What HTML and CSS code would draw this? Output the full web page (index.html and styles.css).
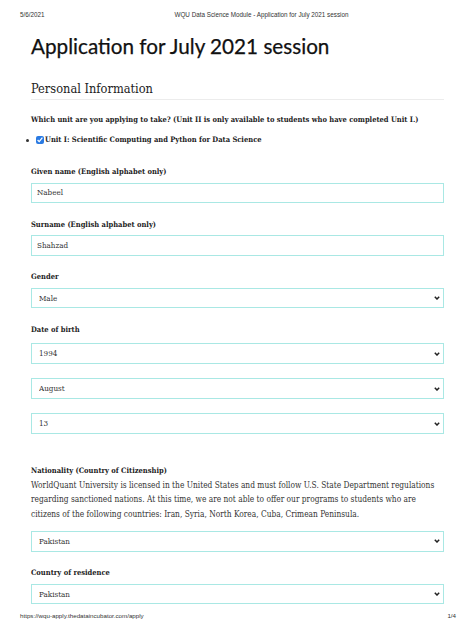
FILE: index.html
```html
<!DOCTYPE html>
<html lang="en">
<head>
<meta charset="utf-8">
<title>WQU Data Science Module - Application for July 2021 session</title>
<link rel="stylesheet" href="styles.css">
</head>
<body>
<header class="print-head">
  <span class="ph-date">5/6/2021</span>
  <span class="ph-title">WQU Data Science Module - Application for July 2021 session</span>
</header>
<main class="page">
  <h1 class="title">Application for July 2021 session</h1>
  <h2 class="section">Personal Information</h2>
  <p class="question">Which unit are you applying to take? (Unit II is only available to students who have completed Unit I.)</p>
  <ul class="units">
    <li class="unit"><input class="check" type="checkbox" checked id="u1"><label for="u1">Unit I: Scientific Computing and Python for Data Science</label></li>
  </ul>

  <div class="field field-first">
    <label class="label">Given name (English alphabet only)</label>
    <input class="box" type="text" value="Nabeel">
  </div>
  <div class="field">
    <label class="label">Surname (English alphabet only)</label>
    <input class="box" type="text" value="Shahzad">
  </div>
  <div class="field">
    <label class="label">Gender</label>
    <div class="sel">
      <select class="box select"><option>Male</option></select>
      <svg class="chev" viewBox="0 0 6 4" width="6" height="4"><path d="M0.8 0.8 L3 3 L5.2 0.8" fill="none" stroke="#222" stroke-width="1.5"/></svg>
    </div>
  </div>
  <div class="field">
    <label class="label label-dob">Date of birth</label>
    <div class="sel">
      <select class="box select"><option>1994</option></select>
      <svg class="chev" viewBox="0 0 6 4" width="6" height="4"><path d="M0.8 0.8 L3 3 L5.2 0.8" fill="none" stroke="#222" stroke-width="1.5"/></svg>
    </div>
    <div class="sel sel-next">
      <select class="box select"><option>August</option></select>
      <svg class="chev" viewBox="0 0 6 4" width="6" height="4"><path d="M0.8 0.8 L3 3 L5.2 0.8" fill="none" stroke="#222" stroke-width="1.5"/></svg>
    </div>
    <div class="sel sel-next">
      <select class="box select"><option>13</option></select>
      <svg class="chev" viewBox="0 0 6 4" width="6" height="4"><path d="M0.8 0.8 L3 3 L5.2 0.8" fill="none" stroke="#222" stroke-width="1.5"/></svg>
    </div>
  </div>
  <div class="field field-nat">
    <label class="label">Nationality (Country of Citizenship)</label>
    <p class="help">WorldQuant University is licensed in the United States and must follow U.S. State Department regulations<br>regarding sanctioned nations. At this time, we are not able to offer our programs to students who are<br>citizens of the following countries: Iran, Syria, North Korea, Cuba, Crimean Peninsula.</p>
    <div class="sel sel-help">
      <select class="box select"><option>Pakistan</option></select>
      <svg class="chev" viewBox="0 0 6 4" width="6" height="4"><path d="M0.8 0.8 L3 3 L5.2 0.8" fill="none" stroke="#222" stroke-width="1.5"/></svg>
    </div>
  </div>
  <div class="field">
    <label class="label">Country of residence</label>
    <div class="sel">
      <select class="box select"><option>Pakistan</option></select>
      <svg class="chev" viewBox="0 0 6 4" width="6" height="4"><path d="M0.8 0.8 L3 3 L5.2 0.8" fill="none" stroke="#222" stroke-width="1.5"/></svg>
    </div>
  </div>
</main>
<footer class="print-foot">
  <span class="pf-url">https://wqu-apply.thedataincubator.com/apply</span>
  <span class="pf-page">1/4</span>
</footer>
</body>
</html>
```
FILE: styles.css
```css
* { box-sizing: border-box; }
html, body { margin: 0; padding: 0; background: #fff; }
body {
  width: 474px;
  height: 632px;
  overflow: hidden;
  display: flex;
  flex-direction: column;
  font-family: "DejaVu Serif Condensed", "DejaVu Serif", serif;
  color: #222;
}

.print-head {
  display: flex;
  padding: 10px 20px 0 20px;
  font-family: "Liberation Sans", Arial, sans-serif;
  font-size: 6.3px;
  line-height: 10px;
  color: #333;
}
.ph-title { margin-left: 130px; }

.page {
  padding: 0 30px 0 31px;
}

.title {
  margin: 14.2px 0 0 0;
  font-family: Lato, "Liberation Sans", sans-serif;
  font-weight: 400;
  font-size: 20.7px;
  line-height: 24px;
  color: #111;
  -webkit-text-stroke: 0.25px #111;
}

.section {
  margin: 23.2px 0 0 0;
  padding-bottom: 2px;
  border-bottom: 1px solid #ececec;
  font-weight: 400;
  font-size: 12.7px;
  line-height: 16px;
  color: #222;
}

.question {
  margin: 13.7px 0 0 0;
  font-size: 7.5px;
  line-height: 12px;
  font-weight: 600;
}

.units {
  list-style: none;
  margin: 8px 0 0 0;
  padding: 0;
}
.unit {
  display: flex;
  align-items: center;
  font-size: 7.5px;
  line-height: 12px;
  font-weight: 600;
}
.unit::before {
  content: "";
  width: 3px;
  height: 3px;
  border-radius: 50%;
  background: #333;
  margin: 0 7px 0 -5.5px;
}
.check {
  width: 8px;
  height: 8px;
  margin: 0 1.5px 0 0;
  accent-color: #2a7ae2;
}

.field { margin-top: 15.7px; }
.field-first { margin-top: 20px; }
.field-nat { margin-top: 30.9px; }

.label {
  display: block;
  font-size: 7.5px;
  line-height: 12px;
  font-weight: 700;
  color: #222;
}

.box {
  display: block;
  width: 100%;
  height: 20.5px;
  margin: 4.5px 0 0 0;
  padding: 0 5px;
  border: 1.5px solid #a9e8e4;
  border-radius: 0;
  background: #fff;
  font-family: inherit;
  font-size: 8px;
  color: #333;
  outline: none;
}

.sel {
  display: grid;
  align-items: center;
  margin-top: 4.5px;
}
.sel > * { grid-area: 1 / 1; }
.sel .box { margin: 0; }
.select {
  -webkit-appearance: none;
  appearance: none;
  padding: 0 7px;
}
.chev {
  justify-self: end;
  margin-right: 4.5px;
}
.label-dob + .sel { margin-top: 7.3px; }
.sel-next { margin-top: 14.5px; }

.help {
  margin: 1.15px 0 0 0;
  font-size: 8.3px;
  line-height: 14.3px;
  color: #333;
  white-space: nowrap;
}
.sel-help { margin-top: 10.25px; }

.print-foot {
  display: flex;
  justify-content: space-between;
  margin-top: 6.9px;
  padding: 0 18px 0 20px;
  font-family: "Liberation Sans", Arial, sans-serif;
  font-size: 6.2px;
  line-height: 10px;
  color: #333;
}
```
